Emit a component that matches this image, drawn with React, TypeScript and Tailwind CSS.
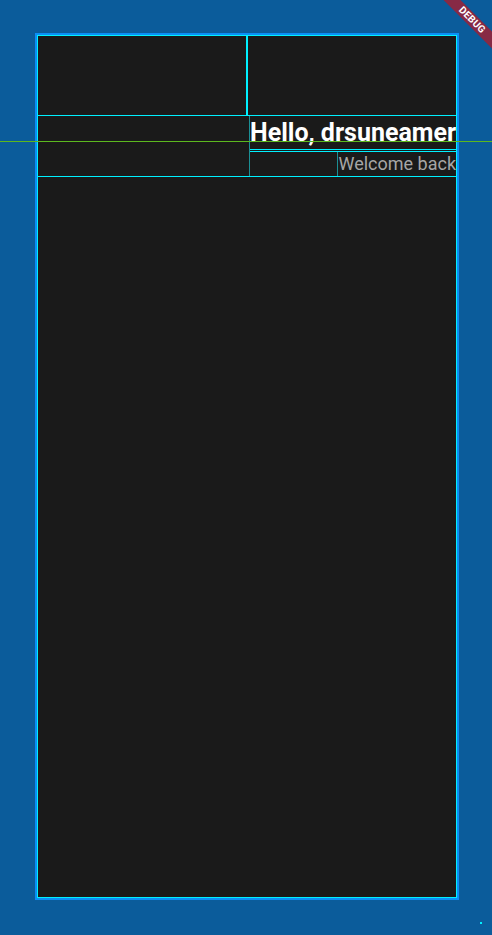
export default function App() {
    return (
        <div className="relative w-[492px] h-[935px] overflow-hidden bg-[#0b5c9b] pl-[35px] pt-[33px] font-['Roboto',sans-serif]">
            {/* outer frame */}
            <div className="w-[424px] h-[867px] border-2 border-[#0b8ef5] flex">
                <div className="flex-1 min-w-0 flex flex-col border border-[#00f0ff] bg-[#1a1a1a]">
                    {/* top row */}
                    <div className="h-[80px] shrink-0 flex border-b border-[#00f0ff]">
                        <div className="w-[208px]"></div>
                        <div className="w-[2px] bg-[#00f0ff]"></div>
                        <div className="flex-1"></div>
                    </div>

                    {/* greeting row */}
                    <div className="h-[61px] shrink-0 flex border-b border-[#00f0ff]">
                        <div className="w-[212px] shrink-0 border-r border-[#1b8f94]"></div>
                        <div className="flex-1 min-w-0 flex flex-col">
                            <div className="h-[34px] border-b border-[#00f0ff] overflow-hidden">
                                <p className="text-[25px] leading-[34px] font-bold text-white whitespace-nowrap">Hello, drsuneamer</p>
                            </div>
                            <div className="h-[1px]"></div>
                            <div className="flex-1 flex justify-end border-t border-[#00f0ff]">
                                <div className="border-l border-[#1b8f94] overflow-hidden">
                                    <p className="text-[18px] leading-[23px] text-[#a6a6a6] whitespace-nowrap">Welcome back</p>
                                </div>
                            </div>
                        </div>
                    </div>

                    <div className="flex-1"></div>
                </div>
            </div>

            {/* baseline guide */}
            <div className="absolute left-0 top-[141px] w-full h-[1px] bg-[#5cb81e]"></div>

            {/* debug banner */}
            <div className="absolute left-[412px] top-[14px] w-[120px] h-[12px] rotate-45 bg-[#872a45] flex items-center justify-center">
                <span className="text-[10px] leading-none font-bold text-white tracking-wide">DEBUG</span>
            </div>

            <div className="absolute left-[480px] top-[922px] w-[2px] h-[2px] bg-[#00f0ff]"></div>
        </div>
    );
}
